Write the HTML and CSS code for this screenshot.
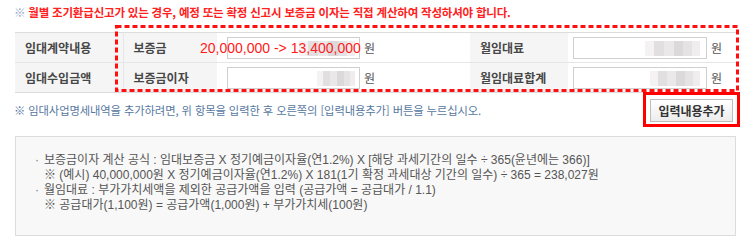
FILE: index.html
```html
<!DOCTYPE html>
<html lang="ko">
<head>
<meta charset="utf-8">
<title>임대사업명세</title>
<link rel="stylesheet" href="styles.css">
</head>
<body>
<div class="page">
  <p class="warn"><span class="mark">※</span> 월별 조기환급신고가 있는 경우, 예정 또는 확정 신고시 보증금 이자는 직접 계산하여 작성하셔야 합니다.</p>

  <div class="form">
    <table class="grid">
      <colgroup>
        <col class="c1"><col class="c2"><col class="c3"><col class="c4"><col class="c5">
      </colgroup>
      <tr>
        <th class="head">임대계약내용</th>
        <th>보증금</th>
        <td class="cell-a">
          <span class="field"><span class="blur b1"></span></span><span class="unit">원</span>
          <span class="note-red">20,000,000 -&gt; 13,400,000</span>
        </td>
        <th>월임대료</th>
        <td class="cell-b"><span class="field"><span class="blur b3"></span></span><span class="unit">원</span></td>
      </tr>
      <tr>
        <th class="head">임대수입금액</th>
        <th>보증금이자</th>
        <td class="cell-a"><span class="field"><span class="blur b2"></span></span><span class="unit">원</span></td>
        <th>월임대료합계</th>
        <td class="cell-b"><span class="field"><span class="blur b4"></span></span><span class="unit">원</span></td>
      </tr>
    </table>
    <svg class="dash-frame" width="625" height="68" viewBox="0 0 625 68" aria-hidden="true">
      <rect x="1.5" y="1.5" width="621" height="64" fill="none" stroke="#ff1010" stroke-width="3" stroke-dasharray="5 3"/>
    </svg>
  </div>

  <div class="actions">
    <p class="hint">※ 임대사업명세내역을 추가하려면, 위 항목을 입력한 후 오른쪽의 [입력내용추가] 버튼을 누르십시오.</p>
    <button class="btn" type="button">입력내용추가</button>
  </div>

  <div class="guide">
    <p class="li">보증금이자 계산 공식 : 임대보증금 X 정기예금이자율(연1.2%) X [해당 과세기간의 일수 ÷ 365(윤년에는 366)]</p>
    <p class="sub">※ (예시) 40,000,000원 X 정기예금이자율(연1.2%) X 181(1기 확정 과세대상 기간의 일수) ÷ 365 = 238,027원</p>
    <p class="li">월임대료 : 부가가치세액을 제외한 공급가액을 입력 (공급가액 = 공급대가 / 1.1)</p>
    <p class="sub">※ 공급대가(1,100원) = 공급가액(1,000원) + 부가가치세(100원)</p>
  </div>
</div>
</body>
</html>
```

FILE: styles.css
```css
* { box-sizing: border-box; }
html, body { margin: 0; padding: 0; background: #fff; }
body {
  font-family: "Noto Sans CJK KR", "Noto Sans", sans-serif;
  font-size: 12px;
  color: #333;
}
.page { width: 746px; height: 246px; position: relative; overflow: hidden; }

.warn {
  margin: 0;
  padding: 4px 0 0 14px;
  height: 32px;
  line-height: 16px;
  font-size: 11.5px;
  font-weight: bold;
  color: #ff2020;
  letter-spacing: -0.2px;
}
.warn .mark { color: #98abc8; font-weight: normal; }

.form { position: relative; margin-left: 15px; width: 722px; }
.grid {
  width: 722px;
  border-collapse: collapse;
  table-layout: fixed;
  border-top: 1px solid #dcdcdc;
  border-bottom: 1px solid #dcdcdc;
}
.c1 { width: 108px; }
.c2 { width: 94px; }
.c3 { width: 253px; }
.c4 { width: 98px; }
.c5 { width: 169px; }
.grid tr { height: 30px; }
.grid tr + tr { border-top: 1px solid #e6e6e6; }
.grid th {
  background: #f5f5f5;
  text-align: left;
  padding: 0 0 0 10px;
  font-weight: bold;
  font-size: 12px;
  color: #474747;
  height: 30px;
}
.grid th.head { border-right: 1px solid #e6e6e6; }
.grid td { padding: 0; position: relative; white-space: nowrap; }
.cell-a { padding-left: 10px !important; }
.cell-b { padding-left: 5px !important; }
.field {
  display: inline-block;
  vertical-align: middle;
  height: 22px;
  border: 1px solid #cfcfcf;
  background: #fff;
  position: relative;
}
.cell-a .field { width: 133px; }
.cell-b .field { width: 134px; }
.unit {
  display: inline-block;
  vertical-align: middle;
  margin-left: 4px;
  font-size: 12px;
  color: #555;
}
.blur {
  position: absolute;
  top: 3px;
  height: 15px;
  background: linear-gradient(90deg, #f4f2f3 0 16%, #e2dfe0 16% 34%, #ebe8ea 34% 52%, #dcd9da 52% 70%, #e6e3e4 70% 86%, #efedee 86% 100%);
}
.b1 { right: 4px; width: 56px; }
.b2 { right: 4px; width: 38px; }
.b3 { right: 6px; width: 55px; }
.b4 { right: 6px; width: 50px; }
.note-red {
  position: absolute;
  left: -17px;
  top: 6px;
  font-family: "Liberation Sans", Arial, sans-serif;
  font-size: 14px;
  line-height: 18px;
  color: #ff1a1a;
}
.dash-frame { position: absolute; left: 100px; top: -7px; pointer-events: none; }

.actions {
  display: flex;
  align-items: center;
  justify-content: space-between;
  height: 33px;
  padding: 0 13px 0 14px;
}
.hint {
  margin: 0;
  font-size: 11.3px;
  color: #56789f;
  letter-spacing: -0.1px;
}
.btn {
  position: relative;
  margin-top: 1px;
  width: 83px;
  height: 23px;
  padding: 0;
  border: 1px solid #bdbdbd;
  background: linear-gradient(#ffffff, #ececec);
  font-family: inherit;
  font-size: 12px;
  font-weight: bold;
  color: #333;
}
.btn::after {
  content: "";
  position: absolute;
  left: -8px;
  right: -8px;
  top: -8px;
  bottom: -6px;
  border: 3px solid #ff0000;
}

.guide {
  margin: 10px 0 0 15px;
  width: 721px;
  height: 100px;
  border: 1px solid #dcdcdc;
  background: #f8f8f8;
  padding: 16px 0 0 0;
  font-family: "Liberation Sans", "Noto Sans CJK KR", sans-serif;
  font-size: 12px;
  line-height: 15px;
  color: #555;
}
.guide p { margin: 0; white-space: nowrap; height: 15px; }
.guide .li { padding-left: 28px; position: relative; }
.guide .li::before {
  content: "·";
  position: absolute;
  left: 19px;
  color: #777;
}
.guide .sub { padding-left: 28px; }
```
